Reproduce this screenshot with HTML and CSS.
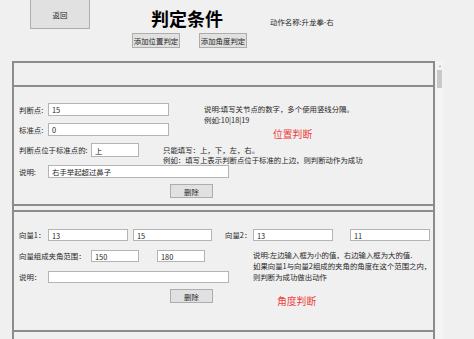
FILE: index.html
```html
<!doctype html>
<html>
    <head>
        <meta charset="utf-8">
        <title>判定条件</title>
        <link rel="stylesheet" href="styles.css">
    </head>
    <body>
        <div class="top-row">
            <button class="btn back">返回</button>
            <h1 class="title">判定条件</h1>
            <span class="action-name">动作名称:升龙拳-右</span>
        </div>
        <div class="add-row">
            <button class="btn add">添加位置判定</button>
            <button class="btn add">添加角度判定</button>
        </div>

        <div class="main">
            <div class="list">
                <div class="item blank"></div>

                <div class="item pos">
                    <div class="row r1">
                        <span class="lbl w29">判断点:</span>
                        <input class="box w121" value="15">
                        <div class="note note-pos1">说明:填写关节点的数字，多个使用竖线分隔。<br>例如:10|18|19</div>
                    </div>
                    <div class="row r2">
                        <span class="lbl w29">标准点:</span>
                        <input class="box w121" value="0">
                        <span class="tag tag-pos">位置判断</span>
                    </div>
                    <div class="row r3">
                        <span class="lbl w72">判断点位于标准点的:</span>
                        <input class="box w48" value="上">
                        <div class="note note-pos2">只能填写：上，下，左，右。<br>例如：填写上表示判断点位于标准的上边，则判断动作为成功</div>
                    </div>
                    <div class="row r4">
                        <span class="lbl w29">说明:</span>
                        <input class="box w181" value="右手举起超过鼻子">
                    </div>
                    <div class="row btn-row">
                        <button class="btn del">删除</button>
                    </div>
                </div>

                <div class="item spacer"></div>

                <div class="item angle">
                    <div class="row a1">
                        <span class="lbl w29">向量1：</span>
                        <input class="box w80" value="13">
                        <input class="box w79 gap5" value="15">
                        <span class="lbl w28 gap13">向量2：</span>
                        <input class="box w80" value="13">
                        <input class="box w80 gap17" value="11">
                    </div>
                    <div class="row a2">
                        <span class="lbl w72">向量组成夹角范围：</span>
                        <input class="box w48" value="150">
                        <input class="box w48 gap18" value="180">
                        <div class="note note-angle">说明:左边输入框为小的值，右边输入框为大的值.<br>如果向量1与向量2组成的夹角的角度在这个范围之内，<br>则判断为成功做出动作</div>
                    </div>
                    <div class="row a3">
                        <span class="lbl w29">说明：</span>
                        <input class="box w181" value="">
                    </div>
                    <div class="row btn-row">
                        <button class="btn del">删除</button>
                        <span class="tag tag-angle">角度判断</span>
                    </div>
                </div>

                <div class="item rest"></div>
            </div>
            <div class="scrollbar">
                <span class="arrow"></span>
                <span class="thumb"></span>
            </div>
        </div>
    </body>
</html>
```

FILE: styles.css
```css
html, body {
    height: 100%;
}
body {
    margin: 0;
    background-color: #f0f0f0;
    font-family: "Noto Sans CJK SC", "Liberation Sans", sans-serif;
    font-size: 7.4px;
    color: #262626;
    overflow: hidden;
}
.btn {
    font-family: inherit;
    font-size: 7.4px;
    color: #262626;
    background-color: #e1e1e1;
    border: 1px solid #adadad;
    padding: 0;
    margin: 0;
}
.top-row {
    display: flex;
    align-items: flex-start;
    padding-left: 30px;
    height: 29px;
}
.back {
    width: 60px;
    height: 29px;
    border-top: none;
}
.title {
    margin: 8px 0 0 61px;
    font-size: 18px;
    line-height: 20px;
    font-weight: bold;
    color: #000;
}
.action-name {
    margin: 17px 0 0 47px;
    line-height: 10px;
}
.add-row {
    display: flex;
    gap: 19px;
    margin-top: 4px;
    padding-left: 132px;
}
.add {
    width: 48px;
    height: 15px;
}

.main {
    display: flex;
    margin-top: 13px;
    padding-left: 12px;
    height: 278px;
}
.list {
    width: 419px;
    border: 2px solid #8c8c8c;
    border-bottom: none;
    overflow: hidden;
}
.item {
    display: flex;
    flex-direction: column;
    border-bottom: 2px solid #8c8c8c;
}
.blank {
    height: 22px;
}
.spacer {
    height: 4px;
}
.pos, .angle {
    box-sizing: border-box;
}
.pos {
    padding-top: 16px;
    height: 119px;
}
.angle {
    padding-top: 17px;
    height: 120px;
}
.rest {
    border-bottom: none;
    height: 40px;
}

.row {
    flex: none;
    display: flex;
    align-items: flex-start;
    padding-left: 5px;
    height: 13px;
}
.r2 { margin-top: 7px; }
.r3 { margin-top: 7px; height: 14px; }
.r4 { margin-top: 8px; }
.a1 { height: 12px; }
.a2 { margin-top: 9px; height: 12px; }
.a3 { margin-top: 9px; height: 12px; }
.btn-row {
    margin-top: 6px;
    height: 14px;
    padding-left: 156px;
}
.lbl {
    flex: none;
    line-height: 13px;
    white-space: nowrap;
}
.a1 .lbl, .a2 .lbl, .a3 .lbl {
    line-height: 12px;
}
.box {
    flex: none;
    box-sizing: border-box;
    height: 100%;
    margin: 0;
    padding: 0 0 0 3px;
    border: 1px solid #b4b4b4;
    background-color: #fff;
    font-family: inherit;
    font-size: 7.4px;
    color: #262626;
    outline: none;
}
.w28 { width: 28px; }
.w29 { width: 29px; }
.w48 { width: 48px; }
.w72 { width: 72px; }
.w79 { width: 79px; }
.w80 { width: 80px; }
.w121 { width: 121px; }
.w181 { width: 181px; }
.gap5 { margin-left: 5px; }
.gap13 { margin-left: 13px; }
.gap17 { margin-left: 17px; }
.gap18 { margin-left: 18px; }

.note {
    flex: none;
    white-space: nowrap;
    line-height: 11px;
}
.note-pos1 {
    margin-left: 35px;
}
.note-pos2 {
    margin: 2px 0 0 24px;
    line-height: 10px;
}
.note-angle {
    margin: -1px 0 0 48px;
}
.tag {
    flex: none;
    color: #ec3f3c;
    font-size: 9.8px;
    line-height: 12px;
    white-space: nowrap;
}
.tag-pos {
    margin: 5px 0 0 104px;
}
.tag-angle {
    margin: 6px 0 0 64px;
}
.del {
    width: 43px;
    height: 14px;
}

.scrollbar {
    display: flex;
    flex-direction: column;
    align-items: center;
    width: 7px;
    margin-left: 1px;
    background-color: #f4f4f4;
}
.arrow {
    margin-top: 4px;
    width: 0;
    height: 0;
    border-left: 1.5px solid transparent;
    border-right: 1.5px solid transparent;
    border-bottom: 2px solid #9a9a9a;
}
.thumb {
    margin-top: 3px;
    width: 5px;
    height: 18px;
    background-color: #c8c8c8;
}
```
